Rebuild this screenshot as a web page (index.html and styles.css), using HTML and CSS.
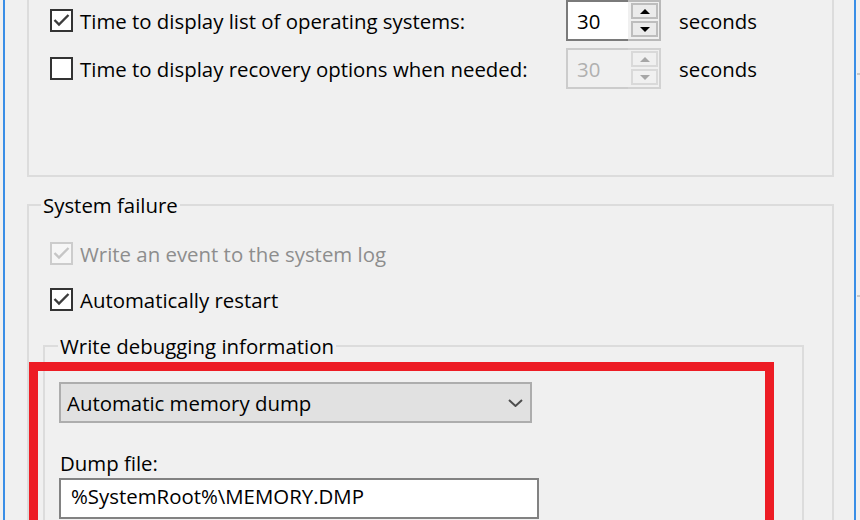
FILE: index.html
```html
<!DOCTYPE html>
<html lang="en">
<head>
    <meta charset="UTF-8">
    <meta name="viewport" content="width=device-width, initial-scale=1.0">
    <title>Startup and Recovery</title>
    <link rel="stylesheet" href="styles.css">
</head>
<body>

    <div class="window">

        <fieldset class="group startup">
            <div class="timer-row">
                <label class="check">
                    <span class="box"><svg viewBox="0 0 19 19"><polyline points="2.5,9 7,13.5 16.5,4"/></svg></span>
                    Time to display list of operating systems:
                </label>
                <div class="spin">
                    <span class="spin-value">30</span>
                    <span class="spin-btns">
                        <span class="spin-btn"><svg viewBox="0 0 10 5"><polygon points="5,0 10,5 0,5"/></svg></span>
                        <span class="spin-btn"><svg viewBox="0 0 10 5"><polygon points="0,0 10,0 5,5"/></svg></span>
                    </span>
                </div>
                <span class="unit">seconds</span>
            </div>

            <div class="timer-row">
                <label class="check">
                    <span class="box empty"></span>
                    Time to display recovery options when needed:
                </label>
                <div class="spin disabled">
                    <span class="spin-value">30</span>
                    <span class="spin-btns">
                        <span class="spin-btn"><svg viewBox="0 0 10 5"><polygon points="5,0 10,5 0,5"/></svg></span>
                        <span class="spin-btn"><svg viewBox="0 0 10 5"><polygon points="0,0 10,0 5,5"/></svg></span>
                    </span>
                </div>
                <span class="unit">seconds</span>
            </div>
        </fieldset>

        <fieldset class="group failure">
            <legend>System failure</legend>

            <label class="check option disabled">
                <span class="box"><svg viewBox="0 0 19 19"><polyline points="2.5,9 7,13.5 16.5,4"/></svg></span>
                Write an event to the system log
            </label>

            <label class="check option restart">
                <span class="box"><svg viewBox="0 0 19 19"><polyline points="2.5,9 7,13.5 16.5,4"/></svg></span>
                Automatically restart
            </label>

            <fieldset class="group debug">
                <legend>Write debugging information</legend>

                <div class="select">
                    <span>Automatic memory dump</span>
                    <svg class="chevron" viewBox="0 0 15 8"><polyline points="1,1 7.5,7 14,1"/></svg>
                </div>

                <div class="field-label">Dump file:</div>
                <div class="textbox">%SystemRoot%\MEMORY.DMP</div>
            </fieldset>
        </fieldset>

        <!-- red annotation drawn over the dialog -->
        <div class="highlight"></div>
    </div>

</body>
</html>
```

FILE: styles.css
```css
html, body {
    margin: 0;
    height: 520px;
    overflow: hidden;
}
body {
    font-family: "Open Sans", "Noto Sans", sans-serif;
    font-size: 20.4px;
    line-height: 28px;
    color: #000;
    background:
        linear-gradient(#c9c9c9, #c9c9c9) right 0 top 73px / 3px 2px no-repeat,
        linear-gradient(#c9c9c9, #c9c9c9) right 0 top 295px / 3px 2px no-repeat,
        #f0f0f0;
}
.window {
    position: relative;
    box-sizing: border-box;
    width: 853px;
    height: 520px;
    margin-left: 3px;
    padding-left: 22px;
    border-left: 2px solid #3a8ee6;
    border-right: 2px solid #3a8ee6;
    background: #f0f0f0;
    overflow: hidden;
}

/* group boxes */
.group {
    box-sizing: border-box;
    min-inline-size: 0;
    margin: 0;
    border: 2px solid #dcdcdc;
}
.group legend {
    padding: 0 2px;
    line-height: 28px;
}
.startup {
    width: 807px;
    margin-top: -20px;
    padding: 18px 0 86px 21px;
}
.failure {
    width: 807px;
    margin-top: 14px;
    padding: 23px 0 200px 12px;
}
.debug {
    width: 761px;
    margin: 21px 0 0 2px;
    padding: 22px 0 100px 13px;
}

/* checkboxes */
.check {
    display: flex;
    align-items: center;
    gap: 7px;
    height: 23px;
    white-space: nowrap;
}
.box {
    box-sizing: border-box;
    flex: none;
    width: 23px;
    height: 23px;
    border: 2px solid #333;
    background: #fff;
}
.box svg {
    display: block;
    width: 19px;
    height: 19px;
    fill: none;
    stroke: #3c3c3c;
    stroke-width: 2.4;
}
.check.disabled {
    color: #8d8d8d;
}
.check.disabled .box {
    border-color: #cccccc;
    background: #f6f6f6;
}
.check.disabled .box svg {
    stroke: #c6c6c6;
}
.option {
    margin-left: 9px;
}
.restart {
    margin-top: 23px;
}

/* timeout rows */
.timer-row {
    display: grid;
    grid-template-columns: 498px 95px auto;
    column-gap: 18px;
    align-items: center;
    height: 41px;
}
.timer-row + .timer-row {
    margin-top: 7px;
}
.spin {
    display: flex;
    height: 41px;
}
.spin-value {
    flex: 1;
    box-sizing: border-box;
    padding-left: 9px;
    display: flex;
    align-items: center;
    background: #fff;
    border: 2px solid #7a7a7a;
    border-right: none;
}
.spin-btns {
    box-sizing: border-box;
    width: 33px;
    display: flex;
    flex-direction: column;
    gap: 2px;
    padding: 1px 1px 2px 3px;
    border: 2px solid #b9b9b9;
    border-left: none;
    background: #f0f0f0;
}
.spin-btn {
    flex: 1;
    box-sizing: border-box;
    display: flex;
    align-items: center;
    justify-content: center;
    border: 2px solid #bdbdbd;
    background: #ebebeb;
}
.spin-btn svg {
    width: 10px;
    height: 5px;
    fill: #000;
}
.spin.disabled .spin-value {
    color: #b0b0b0;
    background: #f0f0f0;
    border-color: #cccccc;
}
.spin.disabled .spin-btns {
    border-color: #d2d2d2;
}
.spin.disabled .spin-btn {
    border-color: #d9d9d9;
    background: #f0f0f0;
}
.spin.disabled .spin-btn svg {
    fill: #a6a6a6;
}

/* debugging information */
.select {
    box-sizing: border-box;
    width: 473px;
    height: 41px;
    margin-left: 1px;
    padding: 0 7px 0 6px;
    display: flex;
    align-items: center;
    justify-content: space-between;
    background: #e1e1e1;
    border: 2px solid #adadad;
}
.chevron {
    width: 15px;
    height: 8px;
    fill: none;
    stroke: #4d4d4d;
    stroke-width: 2;
}
.field-label {
    margin: 26px 0 0 2px;
}
.textbox {
    box-sizing: border-box;
    width: 480px;
    height: 41px;
    margin: 1px 0 0 1px;
    padding: 0 0 5px 10px;
    display: flex;
    align-items: center;
    background: #fff;
    border: 2px solid #828282;
}

.highlight {
    position: absolute;
    left: 24px;
    top: 362px;
    width: 745px;
    height: 300px;
    box-sizing: border-box;
    border: 9px solid #ed1c24;
}
```
